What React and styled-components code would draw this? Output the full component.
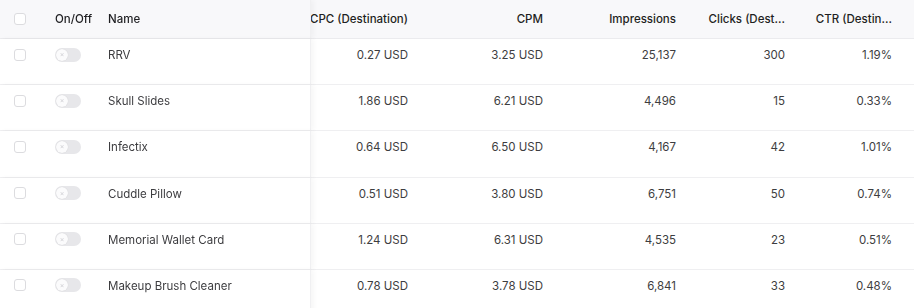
import React, { useLayoutEffect, useRef } from 'react'
import styled, { createGlobalStyle } from 'styled-components'

const GlobalStyle = createGlobalStyle`
  body {
    margin: 0;
    background: #ffffff;
    font-family: Inter, "Helvetica Neue", Arial, sans-serif;
    -webkit-font-smoothing: antialiased;
  }
`

const Wrapper = styled.div`
  width: 914px;
  height: 308px;
  overflow: hidden;
  background: #fff;
`

const Scroller = styled.div`
  width: 914px;
  overflow-x: hidden;
  overflow-y: hidden;
`

const Row = styled.div`
  display: flex;
  width: max-content;
  height: ${(p) => (p.$header ? '39px' : '46.2px')};
  box-sizing: border-box;
  border-bottom: 1px solid ${(p) => (p.$header ? '#ebebee' : '#efeff1')};
  background: ${(p) => (p.$header ? '#f8f8fa' : '#ffffff')};
`

const Frozen = styled.div`
  position: sticky;
  left: 0;
  z-index: 2;
  display: flex;
  align-items: ${(p) => (p.$header ? 'center' : 'flex-start')};
  width: 311px;
  flex-shrink: 0;
  box-sizing: border-box;
  padding-top: ${(p) => (p.$header ? '0' : '9px')};
  background: inherit;
  border-right: 1px solid #f0f0f2;
  box-shadow: 3px 0 5px rgba(0, 0, 0, 0.035);
`

const CheckCell = styled.div`
  width: 55px;
  padding-left: 14px;
  box-sizing: border-box;
  display: flex;
  align-items: center;
  height: 13px;
`

const Checkbox = styled.span`
  display: block;
  width: 12px;
  height: 12px;
  border: 1px solid #dcdcdf;
  border-radius: 3px;
  background: #fff;
  box-sizing: border-box;
`

const ToggleCell = styled.div`
  width: 53px;
  display: flex;
  align-items: center;
  height: 13px;
  font-size: 11.5px;
  font-weight: 500;
  color: #1f1f22;
  white-space: nowrap;
`

const Toggle = styled.span`
  position: relative;
  display: block;
  width: 26px;
  height: 14px;
  border-radius: 7px;
  background: #e7e7ea;
`

const Knob = styled.span`
  position: absolute;
  left: 1px;
  top: 1px;
  width: 12px;
  height: 12px;
  border-radius: 50%;
  background: #fbfbfc;
  box-shadow: 0 0 1px rgba(0, 0, 0, 0.15);
  display: flex;
  align-items: center;
  justify-content: center;
  color: #d4d4d8;
  font-size: 7px;
  line-height: 1;
`

const NameCell = styled.div`
  flex: 1;
  font-size: 11.5px;
  line-height: 14px;
  font-weight: ${(p) => (p.$header ? 500 : 400)};
  color: ${(p) => (p.$header ? '#1f1f22' : '#3d3d40')};
  white-space: nowrap;
`

const Cell = styled.div`
  width: ${(p) => p.$w}px;
  flex-shrink: 0;
  box-sizing: border-box;
  padding-right: 12px;
  padding-top: ${(p) => (p.$header ? '0' : '9px')};
  display: flex;
  align-items: ${(p) => (p.$header ? 'center' : 'flex-start')};
  justify-content: flex-end;
  font-size: 11.5px;
  line-height: 14px;
  font-weight: ${(p) => (p.$header ? 500 : 400)};
  color: ${(p) => (p.$header ? '#1f1f22' : '#3d3d40')};
  white-space: nowrap;
`

const Filler = styled.div`
  width: 24px;
  flex-shrink: 0;
`

const columns = [
  { key: 'cpc', label: 'CPC (Destination)', w: 150 },
  { key: 'cpm', label: 'CPM', w: 135 },
  { key: 'imp', label: 'Impressions', w: 133 },
  { key: 'clicks', label: 'Clicks (Dest...', w: 109 },
  { key: 'ctr', label: 'CTR (Destin...', w: 107 },
]

const rows = [
  { name: 'RRV', cpc: '0.27 USD', cpm: '3.25 USD', imp: '25,137', clicks: '300', ctr: '1.19%' },
  { name: 'Skull Slides', cpc: '1.86 USD', cpm: '6.21 USD', imp: '4,496', clicks: '15', ctr: '0.33%' },
  { name: 'Infectix', cpc: '0.64 USD', cpm: '6.50 USD', imp: '4,167', clicks: '42', ctr: '1.01%' },
  { name: 'Cuddle Pillow', cpc: '0.51 USD', cpm: '3.80 USD', imp: '6,751', clicks: '50', ctr: '0.74%' },
  { name: 'Memorial Wallet Card', cpc: '1.24 USD', cpm: '6.31 USD', imp: '4,535', clicks: '23', ctr: '0.51%' },
  { name: 'Makeup Brush Cleaner', cpc: '0.78 USD', cpm: '3.78 USD', imp: '6,841', clicks: '33', ctr: '0.48%' },
]

export default function App() {
  const ref = useRef(null)

  useLayoutEffect(() => {
    if (ref.current) ref.current.scrollLeft = 41
  }, [])

  return (
    <Wrapper>
      <GlobalStyle />
      <Scroller ref={ref}>
        <Row $header>
          <Frozen $header>
            <CheckCell>
              <Checkbox />
            </CheckCell>
            <ToggleCell>On/Off</ToggleCell>
            <NameCell $header>Name</NameCell>
          </Frozen>
          {columns.map((c) => (
            <Cell key={c.key} $w={c.w} $header>
              {c.label}
            </Cell>
          ))}
          <Filler />
        </Row>
        {rows.map((r) => (
          <Row key={r.name}>
            <Frozen>
              <CheckCell>
                <Checkbox />
              </CheckCell>
              <ToggleCell>
                <Toggle>
                  <Knob>×</Knob>
                </Toggle>
              </ToggleCell>
              <NameCell>{r.name}</NameCell>
            </Frozen>
            {columns.map((c) => (
              <Cell key={c.key} $w={c.w}>
                {r[c.key]}
              </Cell>
            ))}
            <Filler />
          </Row>
        ))}
      </Scroller>
    </Wrapper>
  )
}
